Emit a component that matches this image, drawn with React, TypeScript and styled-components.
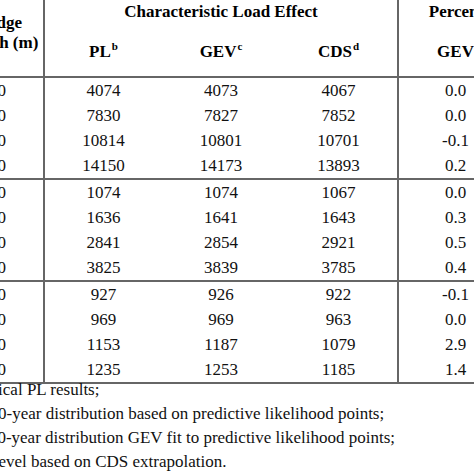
import React from "react";
import styled, { createGlobalStyle } from "styled-components";

const GlobalStyle = createGlobalStyle`
    html, body {
        margin: 0;
        padding: 0;
        background: #ffffff;
        overflow: hidden;
    }
    body {
        font-family: "Liberation Serif", "Times New Roman", serif;
        color: #111;
    }
`;

const Page = styled.div`
    width: 474px;
    height: 474px;
    overflow: hidden;
    background: #fff;
`;

// the screenshot is a crop of a wider table, so the table starts off to the left/top
const Sheet = styled.div`
    margin: -10px 0 0 -48px;
    width: 700px;
`;

const Table = styled.table`
    border-collapse: collapse;
    table-layout: fixed;
    width: 666px;
    font-size: 17px;
`;

const Th = styled.th<{ $right?: boolean; $bottom?: boolean; $h?: number; $pb?: number }>`
    font-weight: bold;
    text-align: center;
    vertical-align: middle;
    padding: 0 0 ${(p) => p.$pb ?? 0}px 0;
    color: #000;
    height: ${(p) => (p.$h ? `${p.$h}px` : "auto")};
    border-right: ${(p) => (p.$right ? "2px solid #666" : "none")};
    border-bottom: ${(p) => (p.$bottom ? "2px solid #666" : "none")};
    line-height: 20px;
    white-space: nowrap;
`;

const Sup = styled.sup`
    font-size: 11px;
    vertical-align: 7px;
    line-height: 0;
    margin-left: 1px;
`;

const Row = styled.tr<{ $last?: boolean }>`
    height: 25px;
    border-bottom: ${(p) => (p.$last ? "2px solid #666" : "none")};
`;

const Td = styled.td<{ $right?: boolean }>`
    text-align: center;
    padding: 0;
    line-height: 25px;
    border-right: ${(p) => (p.$right ? "2px solid #666" : "none")};
    white-space: nowrap;
`;

const Notes = styled.div`
    margin: -6px 0 0 12px;
    font-size: 17px;
    line-height: 24px;
`;

const Note = styled.div`
    white-space: nowrap;
`;

const NoteMark = styled.sup`
    font-size: 11px;
    vertical-align: 7px;
    line-height: 0;
    margin-right: 3px;
`;

type Entry = { len: string; pl: string; gev: string; cds: string; dGev: string; dCds: string };

const groups: Entry[][] = [
    [
        { len: "20", pl: "4074", gev: "4073", cds: "4067", dGev: "0.0", dCds: "-0.2" },
        { len: "30", pl: "7830", gev: "7827", cds: "7852", dGev: "0.0", dCds: "0.3" },
        { len: "40", pl: "10814", gev: "10801", cds: "10701", dGev: "-0.1", dCds: "-1.0" },
        { len: "50", pl: "14150", gev: "14173", cds: "13893", dGev: "0.2", dCds: "-1.8" },
    ],
    [
        { len: "20", pl: "1074", gev: "1074", cds: "1067", dGev: "0.0", dCds: "-0.7" },
        { len: "30", pl: "1636", gev: "1641", cds: "1643", dGev: "0.3", dCds: "0.4" },
        { len: "40", pl: "2841", gev: "2854", cds: "2921", dGev: "0.5", dCds: "2.8" },
        { len: "50", pl: "3825", gev: "3839", cds: "3785", dGev: "0.4", dCds: "-1.0" },
    ],
    [
        { len: "20", pl: "927", gev: "926", cds: "922", dGev: "-0.1", dCds: "-0.5" },
        { len: "30", pl: "969", gev: "969", cds: "963", dGev: "0.0", dCds: "-0.6" },
        { len: "40", pl: "1153", gev: "1187", cds: "1079", dGev: "2.9", dCds: "-6.4" },
        { len: "50", pl: "1235", gev: "1253", cds: "1185", dGev: "1.4", dCds: "-4.0" },
    ],
];

const notes: [string, string][] = [
    ["a", "Typical PL results;"],
    ["b", "1000-year distribution based on predictive likelihood points;"],
    ["c", "1000-year distribution GEV fit to predictive likelihood points;"],
    ["d", "At level based on CDS extrapolation."],
];

const App: React.FC = () => {
    return (
        <Page>
            <GlobalStyle />
            <Sheet>
                <Table>
                    <colgroup>
                        <col style={{ width: 92 }} />
                        <col style={{ width: 118 }} />
                        <col style={{ width: 118 }} />
                        <col style={{ width: 118 }} />
                        <col style={{ width: 114 }} />
                        <col style={{ width: 106 }} />
                    </colgroup>
                    <thead>
                        <tr>
                            <Th rowSpan={2} $right $bottom>
                                Bridge
                                <br />
                                Length (m)
                            </Th>
                            <Th colSpan={3} $right $h={44}>
                                Characteristic Load Effect
                            </Th>
                            <Th colSpan={2} $h={44}>
                                Percentage Difference
                            </Th>
                        </tr>
                        <tr>
                            <Th $bottom $h={36} $pb={6}>PL<Sup>b</Sup></Th>
                            <Th $bottom $pb={6}>GEV<Sup>c</Sup></Th>
                            <Th $bottom $right $pb={6}>CDS<Sup>d</Sup></Th>
                            <Th $bottom $pb={6}>GEV</Th>
                            <Th $bottom $pb={6}>CDS</Th>
                        </tr>
                    </thead>
                    {groups.map((g, gi) => (
                        <tbody key={gi}>
                            {g.map((r, i) => (
                                <Row key={i} $last={i === g.length - 1}>
                                    <Td $right>{r.len}</Td>
                                    <Td>{r.pl}</Td>
                                    <Td>{r.gev}</Td>
                                    <Td $right>{r.cds}</Td>
                                    <Td>{r.dGev}</Td>
                                    <Td>{r.dCds}</Td>
                                </Row>
                            ))}
                        </tbody>
                    ))}
                </Table>
                <Notes>
                    {notes.map(([m, t]) => (
                        <Note key={m}>
                            <NoteMark>{m}</NoteMark>
                            {t}
                        </Note>
                    ))}
                </Notes>
            </Sheet>
        </Page>
    );
};

export default App;
